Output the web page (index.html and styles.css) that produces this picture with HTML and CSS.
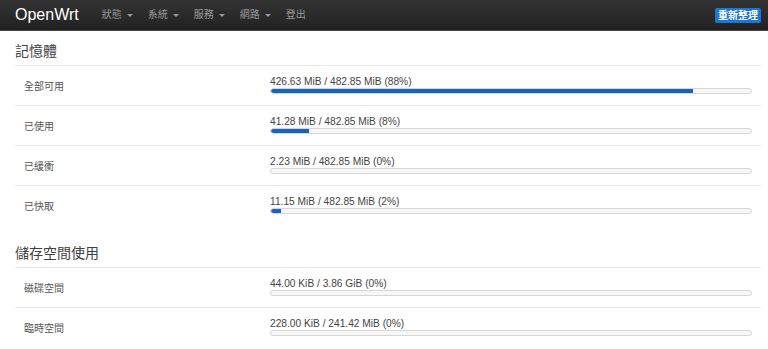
FILE: index.html
```html
<!DOCTYPE html>
<html lang="zh-Hant">
<head>
<meta charset="utf-8">
<title>OpenWrt</title>
<link rel="stylesheet" href="styles.css">
</head>
<body>
<header class="topbar">
  <div class="brand">OpenWrt</div>
  <nav class="menu">
    <span class="menu-item">狀態<span class="caret"></span></span>
    <span class="menu-item">系統<span class="caret"></span></span>
    <span class="menu-item">服務<span class="caret"></span></span>
    <span class="menu-item">網路<span class="caret"></span></span>
    <span class="menu-item">登出</span>
  </nav>
  <span class="refresh">重新整理</span>
</header>
<main class="content">
  <section class="section first">
    <h3 class="section-title">記憶體</h3>
    <div class="table">
      <div class="row">
        <div class="label">全部可用</div>
        <div class="value">
          <div class="value-text">426.63 MiB / 482.85 MiB (88%)</div>
          <div class="bar"><div class="fill" style="width:88%"></div></div>
        </div>
      </div>
      <div class="row">
        <div class="label">已使用</div>
        <div class="value">
          <div class="value-text">41.28 MiB / 482.85 MiB (8%)</div>
          <div class="bar"><div class="fill" style="width:8%"></div></div>
        </div>
      </div>
      <div class="row">
        <div class="label">已緩衝</div>
        <div class="value">
          <div class="value-text">2.23 MiB / 482.85 MiB (0%)</div>
          <div class="bar"><div class="fill" style="width:0%"></div></div>
        </div>
      </div>
      <div class="row">
        <div class="label">已快取</div>
        <div class="value">
          <div class="value-text">11.15 MiB / 482.85 MiB (2%)</div>
          <div class="bar"><div class="fill" style="width:2%"></div></div>
        </div>
      </div>
    </div>
  </section>
  <section class="section">
    <h3 class="section-title">儲存空間使用</h3>
    <div class="table">
      <div class="row">
        <div class="label">磁碟空間</div>
        <div class="value">
          <div class="value-text">44.00 KiB / 3.86 GiB (0%)</div>
          <div class="bar"><div class="fill" style="width:0%"></div></div>
        </div>
      </div>
      <div class="row">
        <div class="label">臨時空間</div>
        <div class="value">
          <div class="value-text">228.00 KiB / 241.42 MiB (0%)</div>
          <div class="bar"><div class="fill" style="width:0%"></div></div>
        </div>
      </div>
    </div>
  </section>
</main>
</body>
</html>
```
FILE: styles.css
```css
* { box-sizing: border-box; }
html, body { margin: 0; padding: 0; background: #fff; }
body {
  font-family: "Liberation Sans", "Noto Sans CJK TC", sans-serif;
  color: #404040;
}
.topbar {
  height: 31px;
  display: flex;
  align-items: center;
  padding: 0 7px 0 15px;
  background: linear-gradient(#333333, #222222);
  border-bottom: 1px solid #444;
}
.brand {
  color: #fff;
  font-size: 16px;
  line-height: 20px;
  margin-right: 23px;
}
.menu {
  display: flex;
  align-items: center;
  gap: 15px;
  flex: 1;
}
.menu-item {
  color: #9a9a9a;
  font-size: 10px;
  line-height: 14px;
  display: flex;
  align-items: center;
}
.caret {
  display: inline-block;
  width: 0;
  height: 0;
  margin-left: 5px;
  border-left: 3px solid transparent;
  border-right: 3px solid transparent;
  border-top: 3px solid #9a9a9a;
}
.refresh {
  background: #1c76d8;
  color: #fff;
  font-size: 10px;
  font-weight: bold;
  line-height: 15px;
  padding: 0 3px;
  border-radius: 2px;
}
.content {
  padding: 0 7px 0 15px;
}
.section { padding-top: 18px; }
.section.first { padding-top: 10px; }
.section-title {
  margin: 0 0 4px 0;
  font-size: 14px;
  line-height: 20px;
  font-weight: normal;
  color: #404040;
}
.row {
  display: flex;
  align-items: center;
  height: 40px;
  border-top: 1px solid #e6e6e6;
}
.label {
  width: 255px;
  padding-left: 9px;
  font-size: 10px;
  color: #555;
}
.value {
  flex: 1;
  padding-right: 9px;
  padding-bottom: 2px;
}
.value-text {
  font-size: 10.2px;
  line-height: 13px;
  color: #444;
}
.bar {
  height: 6px;
  border: 1px solid #d6d6d6;
  border-radius: 3px;
  background: #f7f7f7;
  overflow: hidden;
}
.fill {
  height: 100%;
  background: #1565c0;
  border-radius: 3px 0 0 3px;
}
```
